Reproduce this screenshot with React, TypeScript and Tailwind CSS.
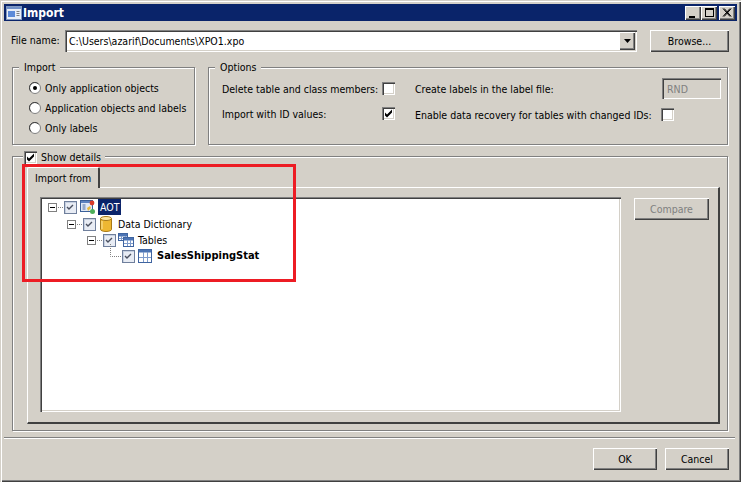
import React from "react";

const raised = "shadow-[inset_1px_1px_0_#fff,inset_-1px_-1px_0_#404040,inset_-2px_-2px_0_#808080]";
const sunken = "shadow-[inset_1px_1px_0_#808080,inset_2px_2px_0_#404040,inset_-1px_-1px_0_#fff,inset_-2px_-2px_0_#d4d0c8]";
const etched = "border border-[#808080] shadow-[inset_1px_1px_0_#fff,1px_1px_0_#fff]";

function Btn({ label, w, disabled }: { label: string; w: string; disabled?: boolean }) {
  return (
    <div className={`${w} h-[22px] flex items-center justify-center bg-[#d4d0c8] ${raised} ${disabled ? "text-[#808080]" : ""}`}>
      {label}
    </div>
  );
}

function Check({ on }: { on?: boolean }) {
  return (
    <div className={`w-[13px] h-[13px] shrink-0 bg-white ${sunken}`}>
      {on && (
        <svg width="13" height="13" viewBox="0 0 13 13">
          <path d="M3 5.500l2 2 5-5v3l-5 5-2-2z" fill="#000" />
        </svg>
      )}
    </div>
  );
}

function Radio({ on, label }: { on?: boolean; label: string }) {
  return (
    <div className="flex items-center h-5 gap-[4px]">
      <svg width="12" height="12" viewBox="0 0 12 12" className="shrink-0">
        <circle cx="6" cy="6" r="5.5" fill="#fff" stroke="#808080" />
        <path d="M2 9.500A5 5 0 0 1 9.500 2" fill="none" stroke="#404040" />
        {on && <circle cx="6" cy="6" r="2" fill="#000" />}
      </svg>
      <span>{label}</span>
    </div>
  );
}

function TreeCheck() {
  return (
    <div className="w-[13px] h-[13px] shrink-0 border border-[#6f7f9c] bg-[#e8ecf4] shadow-[inset_1px_1px_0_#c6d0e0]">
      <svg width="11" height="11" viewBox="0 0 11 11">
        <path d="M2 5l2 2 4-4" fill="none" stroke="#4a5060" strokeWidth="1.4" />
      </svg>
    </div>
  );
}

function Expander() {
  return (
    <svg width="16" height="9" viewBox="0 0 16 9" className="shrink-0">
      <rect x="0.5" y="0.5" width="8" height="8" fill="#fff" stroke="#808080" />
      <path d="M2 4.500h5" stroke="#000" />
      <path d="M10 4.500h6" stroke="#808080" strokeDasharray="1 1" />
    </svg>
  );
}

function AotIcon() {
  return (
    <svg width="16" height="16" viewBox="0 0 16 16" className="shrink-0">
      <rect x="0.5" y="1.500" width="12" height="11" fill="#dfe8f6" stroke="#3a5f9a" />
      <rect x="1" y="2" width="11" height="2" fill="#5c82c0" />
      <path d="M2.500 6h3M2.500 8h3M2.500 10h3" stroke="#4a6aa0" />
      <path d="M7 9l3-2 1 2-3 3z" fill="#e9b93a" />
      <circle cx="12" cy="4" r="2.400" fill="#d83a2a" />
      <circle cx="12.500" cy="12.500" r="2.500" fill="#4cae5a" />
    </svg>
  );
}

function DbIcon() {
  return (
    <svg width="12" height="16" viewBox="0 0 12 16" className="shrink-0">
      <path d="M0.500 2.500v11c0 1 2.500 2 5.500 2s5.500-1 5.500-2v-11z" fill="#eeb732" stroke="#a87a18" />
      <ellipse cx="6" cy="2.500" rx="5.500" ry="2" fill="#fbe6a2" stroke="#a87a18" />
      <path d="M2 5v8" stroke="#fbe6a2" />
    </svg>
  );
}

function Grid({ x, y, w, h }: { x: number; y: number; w: number; h: number }) {
  return (
    <g>
      <rect x={x + 0.5} y={y + 0.5} width={w - 1} height={h - 1} fill="#fff" stroke="#3f64a0" />
      <rect x={x + 1} y={y + 1} width={w - 2} height="2.500" fill="#4c74b4" />
      <path d={`M${x + 1} ${y + Math.round(h / 2) + 1.5}h${w - 2}`} stroke="#7f9ccc" />
      <path d={`M${x + Math.round(w / 3) + 0.5} ${y + 3}v${h - 4}M${x + Math.round((2 * w) / 3) + 0.5} ${y + 3}v${h - 4}`} stroke="#7f9ccc" />
    </g>
  );
}

function TablesIcon() {
  return (
    <svg width="16" height="16" viewBox="0 0 16 16" className="shrink-0">
      <Grid x={0} y={1} w={10} h={8} />
      <Grid x={5} y={5} w={11} h={10} />
    </svg>
  );
}

function TableIcon() {
  return (
    <svg width="16" height="16" viewBox="0 0 16 16" className="shrink-0">
      <Grid x={1} y={1} w={14} h={14} />
    </svg>
  );
}

export default function App() {
  return (
    <div
      className="w-[741px] h-[482px] overflow-hidden whitespace-nowrap bg-[#d4d0c8] text-[10.5px] leading-[14px] text-black p-[4px] relative shadow-[inset_1px_1px_0_#d4d0c8,inset_2px_2px_0_#fff,inset_-1px_-1px_0_#404040,inset_-2px_-2px_0_#808080]"
      style={{ fontFamily: '"DejaVu Sans Condensed", "DejaVu Sans", Verdana, sans-serif' }}
    >
      {/* Title bar */}
      <div className="h-[17px] bg-[#0a246a] flex items-center pl-[2px] pr-[2px] text-white">
        <svg width="16" height="14" viewBox="0 0 16 14" className="shrink-0">
          <rect x="0.500" y="0.500" width="15" height="13" fill="#e8eef8" stroke="#8098c0" />
          <rect x="1" y="1" width="14" height="2" fill="#7090c8" />
          <rect x="2" y="5" width="7" height="6" fill="#5c8ad8" />
          <path d="M10.500 5.500h3M10.500 7.500h3M10.500 9.500h3" stroke="#808080" />
        </svg>
        <span className="ml-[1px] font-bold text-[12px]">Import</span>
        <div className="ml-auto flex gap-0">
          <div className={`w-[16px] h-[14px] bg-[#d4d0c8] flex items-end justify-center pb-[2px] ${raised}`}>
            <div className="w-[6px] h-[2px] bg-black mr-[2px]" />
          </div>
          <div className={`w-[16px] h-[14px] bg-[#d4d0c8] flex items-center justify-center mr-[2px] ${raised}`}>
            <div className="w-[9px] h-[9px] border border-black border-t-2" />
          </div>
          <div className={`w-[16px] h-[14px] bg-[#d4d0c8] flex items-center justify-center ${raised}`}>
            <svg width="10" height="9" viewBox="0 0 10 9">
              <path d="M1 0.500l7 8M2.200 0.500l7 8M8 0.500l-7 8M9.200 0.500l-7 8" stroke="#000" />
            </svg>
          </div>
        </div>
      </div>

      {/* File name */}
      <div className="flex items-center mt-[9px] pl-[7px]">
        <span className="w-[54px] -mt-[3px]">File name:</span>
        <div className={`w-[572px] h-[22px] bg-white flex items-center pl-[4px] ${sunken}`}>
          <span className="flex-1">C:\Users\azarif\Documents\XPO1.xpo</span>
          <div className={`w-[16px] h-[18px] mr-[2px] flex items-center justify-center bg-[#d4d0c8] ${raised}`}>
            <svg width="7" height="4" viewBox="0 0 7 4"><path d="M0 0h7L3.500 4z" fill="#000" /></svg>
          </div>
        </div>
        <div className="ml-[13px]">
          <Btn label="Browse..." w="w-[79px]" />
        </div>
      </div>

      {/* Import & Options */}
      <div className="flex mt-[15px] ml-[8px] gap-[13px]">
        <div className={`relative w-[183px] h-[78px] pl-[16px] pt-[10px] ${etched}`}>
          <span className="absolute -top-[8px] left-[6px] px-[5px] bg-[#d4d0c8]">Import</span>
          <Radio on label="Only application objects" />
          <Radio label="Application objects and labels" />
          <Radio label="Only labels" />
        </div>
        <div className={`relative w-[520px] h-[78px] flex pl-[13px] pt-[14px] ${etched}`}>
          <span className="absolute -top-[8px] left-[6px] px-[5px] bg-[#d4d0c8]">Options</span>
          <div className="w-[173px] flex flex-col gap-[12px] shrink-0">
            <div className="flex items-center justify-between h-[13px]">
              <span>Delete table and class members:</span>
              <Check />
            </div>
            <div className="flex items-center justify-between h-[13px]">
              <span>Import with ID values:</span>
              <Check on />
            </div>
          </div>
          <div className="ml-[20px] flex-1 flex flex-col">
            <div className="flex items-center justify-between h-[21px] -mt-[4px] pr-[6px]">
              <span>Create labels in the label file:</span>
              <div className={`w-[59px] h-[21px] flex items-center pl-[5px] text-[#808080] bg-[#d4d0c8] ${sunken}`}>RND</div>
            </div>
            <div className="flex items-center h-[13px] mt-[9px]">
              <span className="w-[246px]">Enable data recovery for tables with changed IDs:</span>
              <Check />
            </div>
          </div>
        </div>
      </div>

      {/* Show details */}
      <div className={`relative w-[716px] h-[275px] ml-[8px] mt-[11px] pl-[14px] pt-[10px] ${etched}`}>
        <div className="absolute -top-[7px] left-[10px] flex items-center gap-[4px] pl-[1px] pr-[4px] bg-[#d4d0c8]">
          <Check on />
          <span>Show details</span>
        </div>
        {/* Tab */}
        <div className="w-[73px] h-[21px] pl-[7px] flex items-center border-l border-t border-white border-r-2 border-r-[#404040] rounded-t-[2px] bg-[#d4d0c8] relative z-10">
          Import from
        </div>
        {/* Page */}
        <div className="w-[693px] h-[237px] -mt-[1px] flex pt-[9px] pl-[12px] border-l border-t border-white border-r-2 border-b-2 border-r-[#404040] border-b-[#404040]">
          <div className={`w-[581px] h-[215px] bg-white ${sunken} pt-[2px] pl-[8px] relative`}>
            <div className="flex items-center h-4">
              <Expander />
              <TreeCheck />
              <div className="w-[3px] shrink-0" />
              <AotIcon />
              <span className="ml-[2px] px-[2px] bg-[#0a246a] text-white h-4 flex items-center">AOT</span>
            </div>
            <div className="flex items-center h-4 ml-[19px] mt-[1px]">
              <Expander />
              <TreeCheck />
              <div className="w-[4px] shrink-0" />
              <DbIcon />
              <span className="ml-[6px] -mt-[1px]">Data Dictionary</span>
            </div>
            <div className="flex items-center h-4 ml-[39px]">
              <Expander />
              <TreeCheck />
              <div className="w-[2px] shrink-0" />
              <TablesIcon />
              <span className="ml-[4px] -mt-[1px]">Tables</span>
            </div>
            <div className="flex items-center h-4 ml-[58px]">
              <svg width="16" height="16" viewBox="0 0 16 16" className="shrink-0 -mt-[8px]">
                <path d="M4.500 0v12.500H16" fill="none" stroke="#808080" strokeDasharray="1 1" />
              </svg>
              <TreeCheck />
              <div className="w-[2px] shrink-0" />
              <TableIcon />
              <span className="ml-[4px] font-bold text-[11px]">SalesShippingStat</span>
            </div>
          </div>
          <div className="ml-[13px] mt-[1px]">
            <Btn label="Compare" w="w-[75px]" disabled />
          </div>
        </div>
      </div>

      {/* Separator */}
      <div className="h-[2px] mt-[6px] w-[731px] bg-[#808080] border-b border-white" />

      {/* Buttons */}
      <div className="flex justify-end gap-[8px] mt-[9px] pr-[8px]">
        <Btn label="OK" w="w-[64px]" />
        <Btn label="Cancel" w="w-[64px]" />
      </div>

      {/* Red annotation */}
      <div className="absolute left-[22px] top-[164px] w-[274px] h-[118px] border-[3px] border-[#ed1c24] pointer-events-none" />
    </div>
  );
}
